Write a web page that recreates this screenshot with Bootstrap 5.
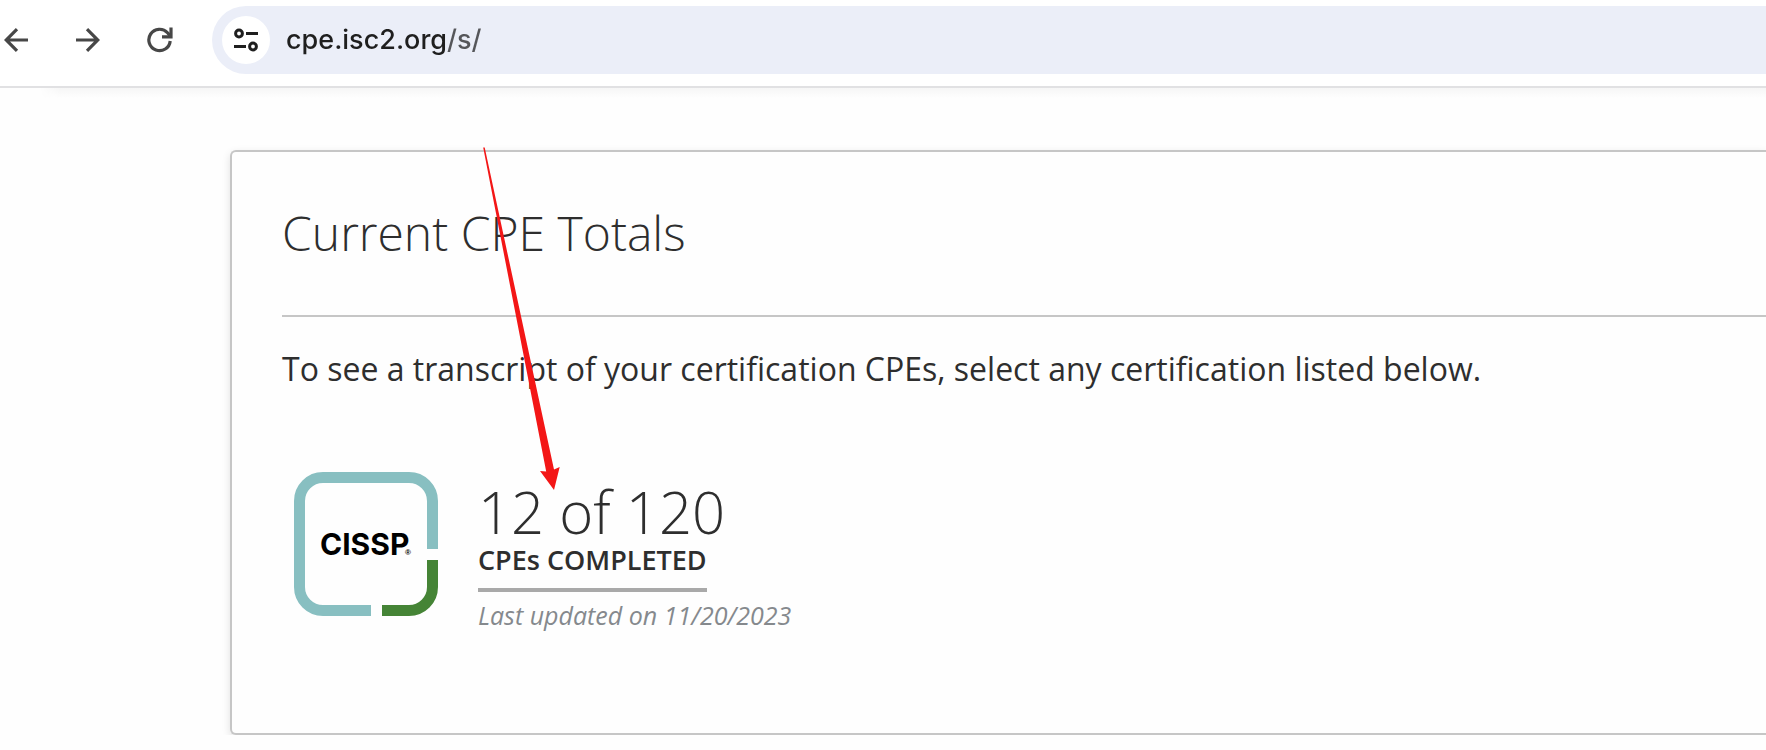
<!DOCTYPE html>
<html lang="en">
<head>
<meta charset="utf-8">
<meta name="viewport" content="width=device-width, initial-scale=1">
<title>CPE Totals</title>
<link href="https://cdn.jsdelivr.net/npm/bootstrap@5.3.0/dist/css/bootstrap.min.css" rel="stylesheet">
<style>
  body { font-family: "Open Sans", sans-serif; color: #2e2e2e; background: #fefefe; overflow-x: hidden; }
  .toolbar { height: 88px; padding-top: 6px; border-bottom: 2px solid #e1e1e3; background: #fff; }
  .nav-btns { height: 68px; width: 212px; gap: 32px; }
  .tool-btn { width: 40px; height: 40px; color: #474747; }
  .nav-btns .tool-btn:first-child { margin-left: -4px; }
  .address { height: 68px; background: #ebeef8; border-radius: 34px 0 0 34px; padding-left: 10px; gap: 16px; }
  .site-btn { width: 48px; height: 48px; background: #fff; color: #1f1f1f; }
  .url-input { font-family: Inter, sans-serif; font-size: 27px; font-weight: 500; line-height: 40px; color: #1f1f1f; outline: 0;
    background: linear-gradient(90deg, #1f1f1f 161px, #55565a 161px); background-clip: text; -webkit-background-clip: text; -webkit-text-fill-color: transparent; }
  .page-shade { height: 10px; margin-left: 40px; background: linear-gradient(#f6f6f6, #fefefe); -webkit-mask-image: linear-gradient(90deg, transparent, #000 20px); }
  .totals { margin: 52px 0 0 230px; padding: 51px 0 100px 50px; background: #fefefe; border: 2px solid #c6c6c6; border-right: 0; border-radius: 6px 0 0 6px; box-shadow: 0 3px 8px rgba(0,0,0,.12); }
  .totals-title { font-size: 48px; line-height: 60px; font-weight: 300; }
  .rule { margin-top: 52px; border-top: 2px solid #c6c6c6; padding-top: 28px; }
  .intro { font-size: 32px; line-height: 48px; }
  .cert { margin-top: 79px; padding-left: 12px; gap: 40px; color: inherit; }
  .cert-text { padding-top: 12px; }
  .count { font-size: 58px; line-height: 56px; font-weight: 300; }
  .done { font-size: 27px; line-height: 40px; font-weight: 600; padding-bottom: 8px; border-bottom: 4px solid #a9a9a9; }
  .updated { font-size: 25px; line-height: 36px; margin-top: 5px; color: #85898d; }
  .pointer-arrow { left: 248px; top: -8px; pointer-events: none; }
</style>
</head>
<body>
<header class="toolbar d-flex">
  <nav class="nav-btns d-flex align-items-center flex-shrink-0" aria-label="Browser">
    <button type="button" class="tool-btn btn p-0 border-0 d-flex align-items-center justify-content-center flex-shrink-0" aria-label="Back">
      <svg width="24" height="24" viewBox="0 0 24 24" fill="none" stroke="currentColor" stroke-width="3.2"><path d="M24 12H2.5M13 1.2 2.2 12 13 22.8"/></svg>
    </button>
    <button type="button" class="tool-btn btn p-0 border-0 d-flex align-items-center justify-content-center flex-shrink-0" aria-label="Forward">
      <svg width="24" height="24" viewBox="0 0 24 24" fill="none" stroke="currentColor" stroke-width="3.2"><path d="M0 12h21.5M11 1.2 21.8 12 11 22.8"/></svg>
    </button>
    <button type="button" class="tool-btn btn p-0 border-0 d-flex align-items-center justify-content-center flex-shrink-0" aria-label="Reload">
      <svg width="26" height="26" viewBox="0 0 26 26" fill="none" stroke="currentColor" stroke-width="3.2"><path d="M23.2 14A10.7 10.7 0 1 1 20.5 5.8L23 8.6"/><path d="M24 .5v9.3H15"/></svg>
    </button>
  </nav>
  <div class="address d-flex align-items-center flex-grow-1">
    <button type="button" class="site-btn btn p-0 border-0 rounded-circle d-flex align-items-center justify-content-center flex-shrink-0" aria-label="View site information">
      <svg width="24" height="24" viewBox="0 0 24 24" fill="none" stroke="currentColor" stroke-width="3"><circle cx="5" cy="5.5" r="3.4"/><path d="M12 5.5h12M0 18.5h12"/><circle cx="19" cy="18.5" r="3.4"/></svg>
    </button>
    <input type="text" class="url-input border-0 p-0 flex-grow-1" aria-label="Address" value="cpe.isc2.org/s/">
  </div>
</header>
<div class="page-shade"></div>
<main>
  <section class="totals position-relative">
    <h1 class="totals-title mb-0">Current CPE Totals</h1>
    <div class="rule">
      <p class="intro mb-0">To see a transcript of your certification CPEs, select any certification listed below.</p>
      <a href="#" class="cert d-inline-flex align-items-start text-decoration-none">
        <svg class="flex-shrink-0" width="144" height="144" viewBox="0 0 144 144" fill="none" stroke-width="11" role="img" aria-label="CISSP">
          <path stroke="#88bfc1" d="M138.500 77V29A23.500 23.500 0 0 0 115 5.500H29A23.500 23.500 0 0 0 5.500 29V115A23.500 23.500 0 0 0 29 138.500H77"/>
          <path stroke="#458436" d="M138.500 88V115A23.500 23.500 0 0 1 115 138.500H88"/>
          <text x="26" y="83" font-family="Inter, sans-serif" font-weight="700" font-size="30" fill="#000">CISSP</text>
          <text x="111" y="83" font-family="Liberation Sans, sans-serif" font-weight="700" font-size="8" fill="#000">®</text>
        </svg>
        <div class="cert-text d-flex flex-column align-items-start">
          <div class="count">12 of 120</div>
          <div class="done">CPEs COMPLETED</div>
          <div class="updated fst-italic">Last updated on 11/20/2023</div>
        </div>
      </a>
    </div>
    <svg class="pointer-arrow position-absolute" width="84" height="350" viewBox="480 144 84 350" aria-hidden="true">
      <path fill="#f31616" d="M483.200 147.500h1.500L554 469.500 559.700 467 554 490 540 471 546.200 471.500Z"/>
    </svg>
  </section>
</main>
<script src="https://cdn.jsdelivr.net/npm/bootstrap@5.3.0/dist/js/bootstrap.bundle.min.js"></script>
</body>
</html>
